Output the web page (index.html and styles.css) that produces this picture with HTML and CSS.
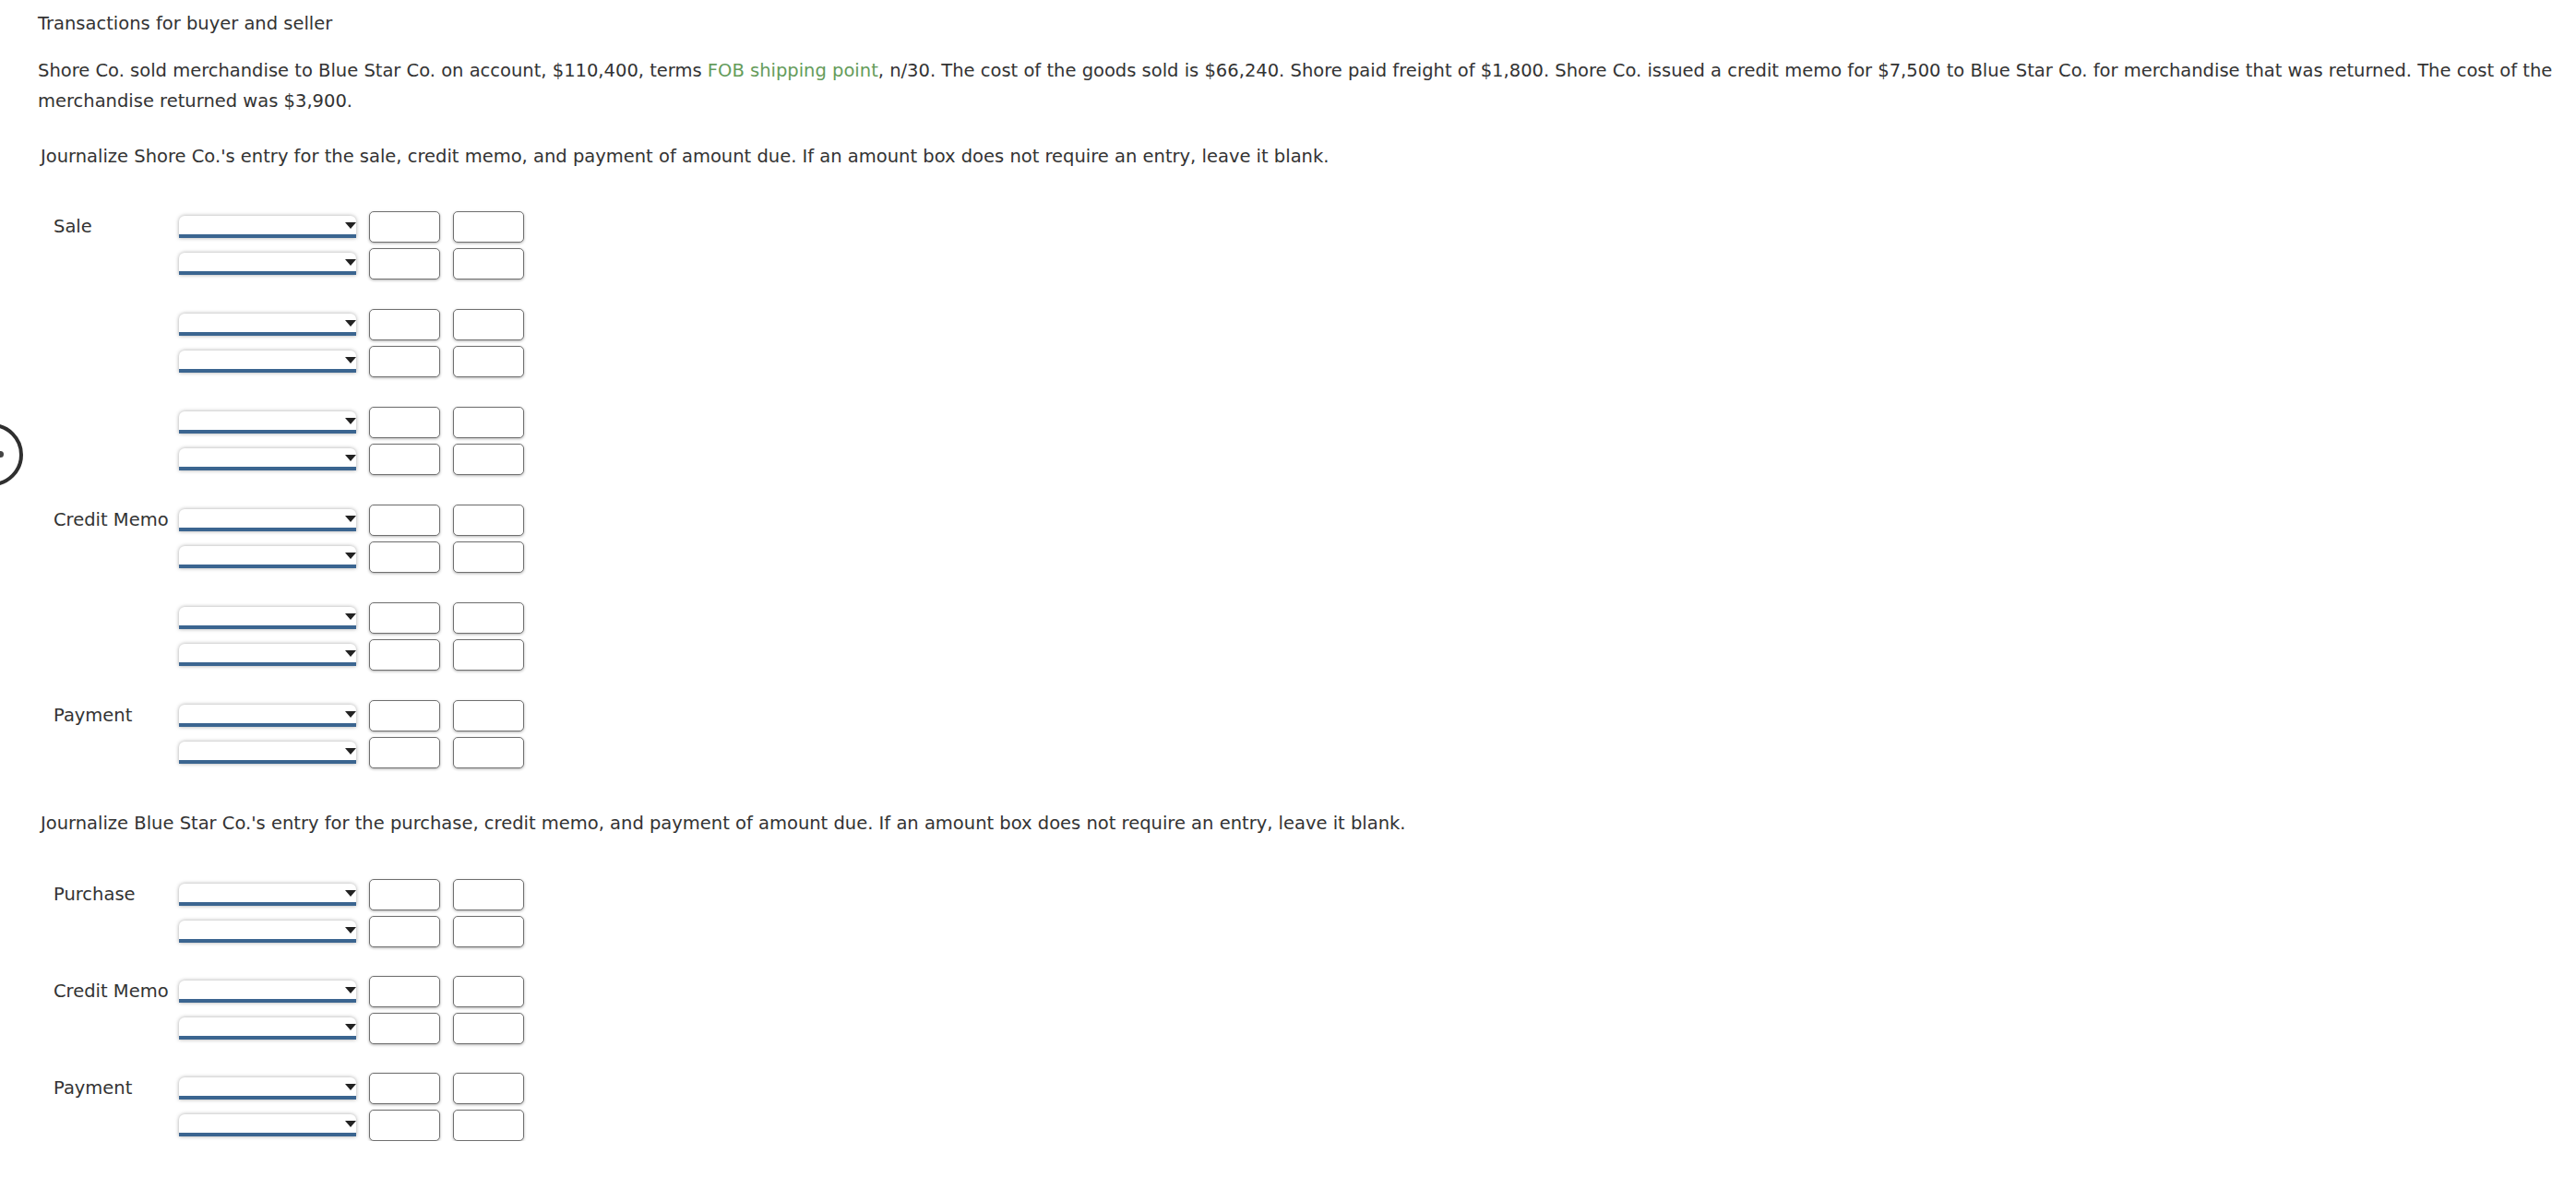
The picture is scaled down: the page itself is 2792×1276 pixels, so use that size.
FILE: index.html
```html
<!DOCTYPE html>
<html lang="en">
<head>
<meta charset="utf-8">
<title>Transactions for buyer and seller</title>
<link rel="stylesheet" href="styles.css">
</head>
<body>
<div class="nav-circle"><span class="nav-dot"></span></div>
<main class="page">
  <p class="title">Transactions for buyer and seller</p>
  <p class="desc">Shore Co. sold merchandise to Blue Star Co. on account, $110,400, terms <span class="term">FOB shipping point</span>, n/30. The cost of the goods sold is $66,240. Shore paid freight of $1,800. Shore Co. issued a credit memo for $7,500 to Blue Star Co. for merchandise that was returned. The cost of the merchandise returned was $3,900.</p>
  <p class="instr">Journalize Shore Co.'s entry for the sale, credit memo, and payment of amount due. If an amount box does not require an entry, leave it blank.</p>

  <div class="journal">
    <div class="entry">
      <div class="label">Sale</div>
      <div class="lines">
        <div class="line"><div class="select"><span class="arrow"></span></div><div class="box"></div><div class="box"></div></div>
        <div class="line"><div class="select"><span class="arrow"></span></div><div class="box"></div><div class="box"></div></div>
      </div>
    </div>
    <div class="entry">
      <div class="label"></div>
      <div class="lines">
        <div class="line"><div class="select"><span class="arrow"></span></div><div class="box"></div><div class="box"></div></div>
        <div class="line"><div class="select"><span class="arrow"></span></div><div class="box"></div><div class="box"></div></div>
      </div>
    </div>
    <div class="entry">
      <div class="label"></div>
      <div class="lines">
        <div class="line"><div class="select"><span class="arrow"></span></div><div class="box"></div><div class="box"></div></div>
        <div class="line"><div class="select"><span class="arrow"></span></div><div class="box"></div><div class="box"></div></div>
      </div>
    </div>
    <div class="entry">
      <div class="label">Credit Memo</div>
      <div class="lines">
        <div class="line"><div class="select"><span class="arrow"></span></div><div class="box"></div><div class="box"></div></div>
        <div class="line"><div class="select"><span class="arrow"></span></div><div class="box"></div><div class="box"></div></div>
      </div>
    </div>
    <div class="entry">
      <div class="label"></div>
      <div class="lines">
        <div class="line"><div class="select"><span class="arrow"></span></div><div class="box"></div><div class="box"></div></div>
        <div class="line"><div class="select"><span class="arrow"></span></div><div class="box"></div><div class="box"></div></div>
      </div>
    </div>
    <div class="entry">
      <div class="label">Payment</div>
      <div class="lines">
        <div class="line"><div class="select"><span class="arrow"></span></div><div class="box"></div><div class="box"></div></div>
        <div class="line"><div class="select"><span class="arrow"></span></div><div class="box"></div><div class="box"></div></div>
      </div>
    </div>
  </div>

  <p class="instr instr-2">Journalize Blue Star Co.'s entry for the purchase, credit memo, and payment of amount due. If an amount box does not require an entry, leave it blank.</p>

  <div class="journal journal-2">
    <div class="entry">
      <div class="label">Purchase</div>
      <div class="lines">
        <div class="line"><div class="select"><span class="arrow"></span></div><div class="box"></div><div class="box"></div></div>
        <div class="line"><div class="select"><span class="arrow"></span></div><div class="box"></div><div class="box"></div></div>
      </div>
    </div>
    <div class="entry">
      <div class="label">Credit Memo</div>
      <div class="lines">
        <div class="line"><div class="select"><span class="arrow"></span></div><div class="box"></div><div class="box"></div></div>
        <div class="line"><div class="select"><span class="arrow"></span></div><div class="box"></div><div class="box"></div></div>
      </div>
    </div>
    <div class="entry">
      <div class="label">Payment</div>
      <div class="lines">
        <div class="line"><div class="select"><span class="arrow"></span></div><div class="box"></div><div class="box"></div></div>
        <div class="line"><div class="select"><span class="arrow"></span></div><div class="box"></div><div class="box"></div></div>
      </div>
    </div>
  </div>
</main>
</body>
</html>
```

FILE: styles.css
```css
html, body {
  margin: 0;
  padding: 0;
  background: #ffffff;
}

body {
  font-family: "DejaVu Sans", Verdana, sans-serif;
  font-size: 19.5px;
  line-height: 33px;
  color: #333333;
  position: relative;
  overflow: hidden;
}

.page {
  padding: 9px 20px 0 41px;
}

p {
  margin: 0;
}

.title {
  margin: 0;
}

.desc {
  margin-top: 18px;
}

.term {
  color: #659c5b;
}

.instr {
  margin-top: 27px;
  padding-left: 3px;
}

.journal {
  margin-top: 43px;
  display: flex;
  flex-direction: column;
  gap: 32px;
}

.instr-2 {
  margin-top: 43px;
}

.journal-2 {
  margin-top: 44px;
  gap: 31px;
}

.entry {
  display: flex;
  align-items: flex-start;
}

.label {
  width: 153px;
  flex: none;
  padding-left: 17px;
  box-sizing: border-box;
  line-height: 34px;
  white-space: nowrap;
}

.lines {
  display: flex;
  flex-direction: column;
  gap: 6px;
}

.line {
  display: flex;
  align-items: center;
  gap: 14px;
  height: 34px;
}

.select {
  position: relative;
  width: 192px;
  height: 20px;
  background: #ffffff;
  border-radius: 6px 6px 0 0;
  border-bottom: 4px solid #3b6590;
  box-shadow: 0 0 4px rgba(0, 0, 0, 0.35);
  margin-top: -1px;
}

.arrow {
  position: absolute;
  right: 0;
  top: 7px;
  width: 0;
  height: 0;
  border-left: 6px solid transparent;
  border-right: 6px solid transparent;
  border-top: 7px solid #222222;
}

.box {
  width: 77px;
  height: 34px;
  box-sizing: border-box;
  border: 1.5px solid #6f6f6f;
  border-radius: 5px;
  background: #ffffff;
  box-shadow: 0 1px 3px rgba(0, 0, 0, 0.3);
}

.nav-circle {
  position: absolute;
  left: -43px;
  top: 459px;
  width: 68px;
  height: 68px;
  box-sizing: border-box;
  border: 4px solid #2f2f2f;
  border-radius: 50%;
}

.nav-dot {
  position: absolute;
  left: 36px;
  top: 26px;
  width: 7px;
  height: 7px;
  background: #444444;
  border-radius: 50%;
}
```
